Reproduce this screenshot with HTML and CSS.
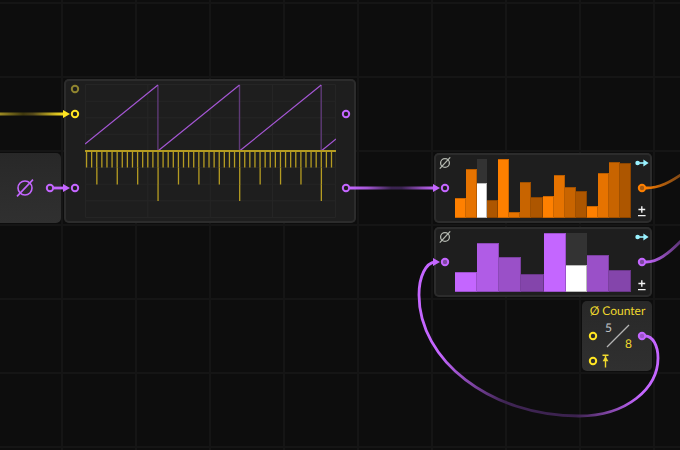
FILE: index.html
```html
<!DOCTYPE html>
<html lang="en">
<head>
<meta charset="utf-8">
<title>Patch canvas</title>
<link rel="stylesheet" href="styles.css">
</head>
<body>
<svg class="defs" aria-hidden="true">
  <symbol id="port" viewBox="0 0 20 20"><circle cx="10" cy="10" r="3.2" stroke="currentColor" stroke-width="2"/></symbol>
  <symbol id="phase" viewBox="0 0 20 20"><circle cx="10" cy="10" r="4.4" fill="none" stroke="currentColor" stroke-width="1.3"/><path d="M4.8 15.6 15.2 4.4" stroke="currentColor" stroke-width="1.3"/></symbol>
  <symbol id="forward" viewBox="0 0 20 20"><circle cx="5.6" cy="10" r="2.3" fill="currentColor"/><path d="M6 10h7" stroke="currentColor" stroke-width="1.6"/><path d="M11.4 6.4 16.6 10l-5.2 3.6z" fill="currentColor"/></symbol>
  <symbol id="plusminus" viewBox="0 0 20 20"><path d="M6.4 6.5h6.8M9.8 3.2v6.6M6 12.6h7.6" fill="none" stroke="currentColor" stroke-width="1.4"/></symbol>
</svg>
<main class="canvas">
  <section class="node source">
    <svg class="big-phase" viewBox="0 0 20 20" aria-label="Phase"><circle cx="10" cy="10" r="7"/><path d="M2 18.4 18 1.6"/></svg>
    <svg class="port purple"><use href="#port"/></svg>
  </section>

  <section class="node panel scope">
    <div class="side">
      <svg class="port olive"><use href="#port"/></svg>
      <svg class="port yellow"><use href="#port"/></svg>
      <svg class="port purple last"><use href="#port"/></svg>
    </div>
    <svg class="plot" viewBox="0 0 251 134" preserveAspectRatio="none" aria-label="Scope">
      <path class="plot-grid" d="M.5 .5h250v133H.5zM62.8 0v134M125.3 0v134M187.5 0v134M0 17.3h251M0 33.8h251M0 50.3h251M0 83.5h251M0 100.2h251M0 116.8h251"/>
      <path class="drop" d="M72.9 1v66M154.5 1v66M236.2 1v66"/>
      <path class="saw" d="M0 60 72.9 1M72.9 67 154.5 1M154.5 67 236.2 1M236.2 67 251 55"/>
      <path class="ticks" d="M0 67h251" stroke-width="1.8"/>
      <path class="ticks" d="M.9 75.3H251" stroke-width="16.6" stroke-dasharray="1.3 3.803"/>
      <path class="ticks" d="M11.2 92H251" stroke-width="16.8" stroke-dasharray="1.3 19.112"/>
      <path class="ticks" d="M72.4 108.6H251" stroke-width="16.6" stroke-dasharray="1.3 80.35"/>
    </svg>
    <div class="side">
      <svg class="port purple second"><use href="#port"/></svg>
      <svg class="port purple last"><use href="#port"/></svg>
    </div>
  </section>

  <section class="node panel seq seq-orange">
    <div class="side">
      <svg class="icon gray"><use href="#phase"/></svg>
      <svg class="port purple"><use href="#port"/></svg>
    </div>
    <div class="bars">
      <i style="height:20px"></i><i style="height:49px"></i><i class="active"><b style="height:35px"></b></i><i style="height:18px"></i>
      <i style="height:59px"></i><i style="height:6px"></i><i style="height:36px"></i><i style="height:21px"></i>
      <i style="height:22px"></i><i style="height:43px"></i><i style="height:31px"></i><i style="height:27px"></i>
      <i style="height:12px"></i><i style="height:45px"></i><i style="height:56px"></i><i style="height:55px"></i>
    </div>
    <div class="side">
      <svg class="icon cyan"><use href="#forward"/></svg>
      <svg class="port orange filled"><use href="#port"/></svg>
      <svg class="icon white"><use href="#plusminus"/></svg>
    </div>
  </section>

  <section class="node panel seq seq-purple">
    <div class="side">
      <svg class="icon gray"><use href="#phase"/></svg>
      <svg class="port purple filled"><use href="#port"/></svg>
    </div>
    <div class="bars">
      <i style="height:20px"></i><i style="height:49px"></i><i style="height:35px"></i><i style="height:18px"></i>
      <i style="height:59px"></i><i class="active"><b style="height:27px"></b></i><i style="height:37px"></i><i style="height:22px"></i>
    </div>
    <div class="side">
      <svg class="icon cyan"><use href="#forward"/></svg>
      <svg class="port purple filled"><use href="#port"/></svg>
      <svg class="icon white"><use href="#plusminus"/></svg>
    </div>
  </section>

  <section class="node counter">
    <h2>Ø Counter</h2>
    <svg class="port yellow"><use href="#port"/></svg>
    <div class="ratio">
      <span class="step">5</span>
      <svg class="slash" viewBox="0 0 24 24"><path d="M1 23 23 1"/></svg>
      <span class="total">8</span>
    </div>
    <svg class="port purple solid"><use href="#port"/></svg>
    <svg class="port yellow"><use href="#port"/></svg>
    <svg class="reset" viewBox="0 0 5 14" aria-label="Reset"><path d="M-.5 1.2h6M2.5 2v11.4" stroke="currentColor" stroke-width="1.4"/><path d="M2.5 2.2 5.4 7.2H-.4z" fill="currentColor"/></svg>
  </section>

  <svg class="cables" aria-hidden="true">
    <defs>
      <linearGradient id="g-yellow" gradientUnits="userSpaceOnUse" x1="0" y1="0" x2="66" y2="0"><stop offset="0" stop-color="#9c8a22"/><stop offset=".35" stop-color="#3f380e"/><stop offset=".5" stop-color="#55491a"/><stop offset=".85" stop-color="#d8c020"/><stop offset="1" stop-color="#ffe522"/></linearGradient>
      <linearGradient id="g-link" gradientUnits="userSpaceOnUse" x1="350" y1="0" x2="436" y2="0"><stop offset="0" stop-color="#c466ff"/><stop offset=".2" stop-color="#a557d6"/><stop offset=".48" stop-color="#3a2350"/><stop offset=".6" stop-color="#3a2350"/><stop offset=".85" stop-color="#9850c4"/><stop offset="1" stop-color="#c466ff"/></linearGradient>
      <linearGradient id="g-loop" gradientUnits="userSpaceOnUse" x1="440" y1="0" x2="640" y2="0"><stop offset="0" stop-color="#c466ff"/><stop offset=".14" stop-color="#8748ae"/><stop offset=".32" stop-color="#3f2554"/><stop offset=".68" stop-color="#3b224e"/><stop offset=".84" stop-color="#8045a4"/><stop offset="1" stop-color="#c466ff"/></linearGradient>
      <linearGradient id="g-orange" gradientUnits="userSpaceOnUse" x1="646" y1="0" x2="682" y2="0"><stop offset="0" stop-color="#ff8000"/><stop offset=".4" stop-color="#b8600a"/><stop offset="1" stop-color="#7d4716"/></linearGradient>
      <linearGradient id="g-out" gradientUnits="userSpaceOnUse" x1="646" y1="0" x2="682" y2="0"><stop offset="0" stop-color="#c466ff"/><stop offset=".5" stop-color="#8a4bb0"/><stop offset="1" stop-color="#583272"/></linearGradient>
    </defs>
    <path stroke="url(#g-yellow)" d="M0 114 65 114.01"/>
    <path class="head yellow" d="M63 110l7 4-7 4z"/>
    <path stroke="#c466ff" d="M54 188H65"/>
    <path class="head purple" d="M63 184l7 4-7 4z"/>
    <path stroke="url(#g-link)" d="M350 188 436 188.01"/>
    <path class="head purple" d="M433 184l7 4-7 4z"/>
    <path stroke="url(#g-loop)" d="M645 336C653 336 658 346 658 358C658 388 627 416 579 416C490 416 419 360 419 295C419 276 426 263 435 262"/>
    <path class="head purple" d="M433 258l7 4-7 4z"/>
    <path stroke="url(#g-orange)" d="M646 188C660 188 670 182 682 174"/>
    <path stroke="url(#g-out)" d="M646 262C658 262 668 254 682 240"/>
  </svg>
</main>
</body>
</html>
```
FILE: styles.css
```css
* { box-sizing: border-box; }

body {
  margin: 0;
  background: #0d0d0d;
  font-family: Lato, sans-serif;
  font-size: 12px;
  text-rendering: geometricPrecision;
}

svg { display: block; }

.defs { position: absolute; width: 0; height: 0; }

.canvas {
  position: relative;
  min-height: 100vh;
  overflow: hidden;
  background-image:
    linear-gradient(90deg, #151515 2px, transparent 2px),
    linear-gradient(#151515 2px, transparent 2px);
  background-size: 74px 74px;
  background-position: 61px 2px;
}

.cables {
  position: absolute;
  inset: 0;
  width: 100%;
  height: 100%;
  fill: none;
  stroke-width: 2.8;
  pointer-events: none;
}
.head { fill: currentColor; }

/* Nodes sit at their patch coordinates */
.node {
  position: absolute;
  border-radius: 5px;
  background: linear-gradient(#282828, #303030);
}
.panel {
  display: flex;
  padding-left: 1px;
  background: #1e1e1e;
  box-shadow: inset 0 0 0 2px #2c2c2c;
}
.source {
  left: -10px;
  top: 153px;
  width: 71px;
  height: 70px;
  display: flex;
  align-items: center;
  justify-content: flex-end;
  gap: 5px;
}
.source .port { margin-right: 1px; }
.scope { left: 64px; top: 79px; width: 292px; height: 144px; }
.seq { left: 434px; width: 218px; height: 70px; }
.seq-orange { top: 153px; }
.seq-purple { top: 227px; }
.counter { left: 582px; top: 301px; }

.side {
  display: flex;
  flex-direction: column;
  gap: 5px;
  width: 20px;
}
.port, .icon { width: 20px; height: 20px; fill: none; }
.second { margin-top: 25px; }
.last { margin-top: auto; margin-bottom: 25px; }

.purple { color: #c466ff; }
.yellow { color: #ffe522; }
.olive { color: #8f842f; }
.orange { color: #ff8000; }
.gray { color: #b4b8b0; }
.cyan { color: #99f2ff; }
.white { color: #f2f2f2; }
.port.purple.filled { fill: #7d48a0; }
.port.purple.solid { fill: #9c56c8; }
.port.orange.filled { fill: #a45a12; }

.big-phase {
  width: 20px;
  height: 20px;
  fill: none;
  stroke: #c466ff;
  stroke-width: 1.6;
}

.plot { flex: 1; min-width: 0; height: 134px; margin-top: 5px; fill: none; }
.plot-grid { stroke: #252525; }
.saw { stroke: #a356d2; stroke-width: 1.2; }
.drop { stroke: #5e3a76; stroke-width: 1.4; }
.ticks { stroke: #b59c22; }

.bars {
  flex: 1;
  display: flex;
  align-items: flex-end;
  padding: 6px 1px 5px 0;
}
.bars i {
  flex: 1;
  border: solid rgb(0 0 0 / 20%);
  border-width: 1px 1px 1px 0;
}
.seq-orange i:nth-child(4n+1) { background: #ff8000; }
.seq-orange i:nth-child(4n+2) { background: #e67300; }
.seq-orange i:nth-child(4n+3) { background: #c86400; }
.seq-orange i:nth-child(4n) { background: #ad5600; }
.seq-purple i:nth-child(4n+1) { background: #c466ff; }
.seq-purple i:nth-child(4n+2) { background: #b05ce6; }
.seq-purple i:nth-child(4n+3) { background: #9a50c8; }
.seq-purple i:nth-child(4n) { background: #8445ab; }
.bars i.active {
  display: flex;
  align-items: flex-end;
  height: 59px;
  border: 0;
  background: #333;
}
.active b {
  flex: 1;
  border: solid #bbb;
  border-width: 1px 1px 1px 0;
  background: #fff;
}

.counter {
  display: grid;
  grid-template-columns: 20px 29px 20px;
  grid-auto-rows: 20px;
  row-gap: 5px;
  padding-left: 1px;
}
.counter h2 {
  grid-column: 1 / -1;
  margin: 0;
  font-size: 12px;
  font-weight: 400;
  line-height: 20px;
  text-align: center;
  color: #f0d92e;
}
.ratio {
  position: relative;
  align-self: center;
  display: flex;
  justify-content: space-between;
  height: 30px;
  padding-left: 2px;
  line-height: 14px;
}
.step { color: #c4c8cc; }
.total { align-self: flex-end; color: #f0d92e; }
.slash {
  position: absolute;
  left: 3px;
  top: 3px;
  width: 24px;
  height: 24px;
  stroke: #b4b4b4;
  stroke-width: 1.2;
}
.reset { width: 5px; height: 14px; align-self: center; overflow: visible; color: #f0d92e; }
```
